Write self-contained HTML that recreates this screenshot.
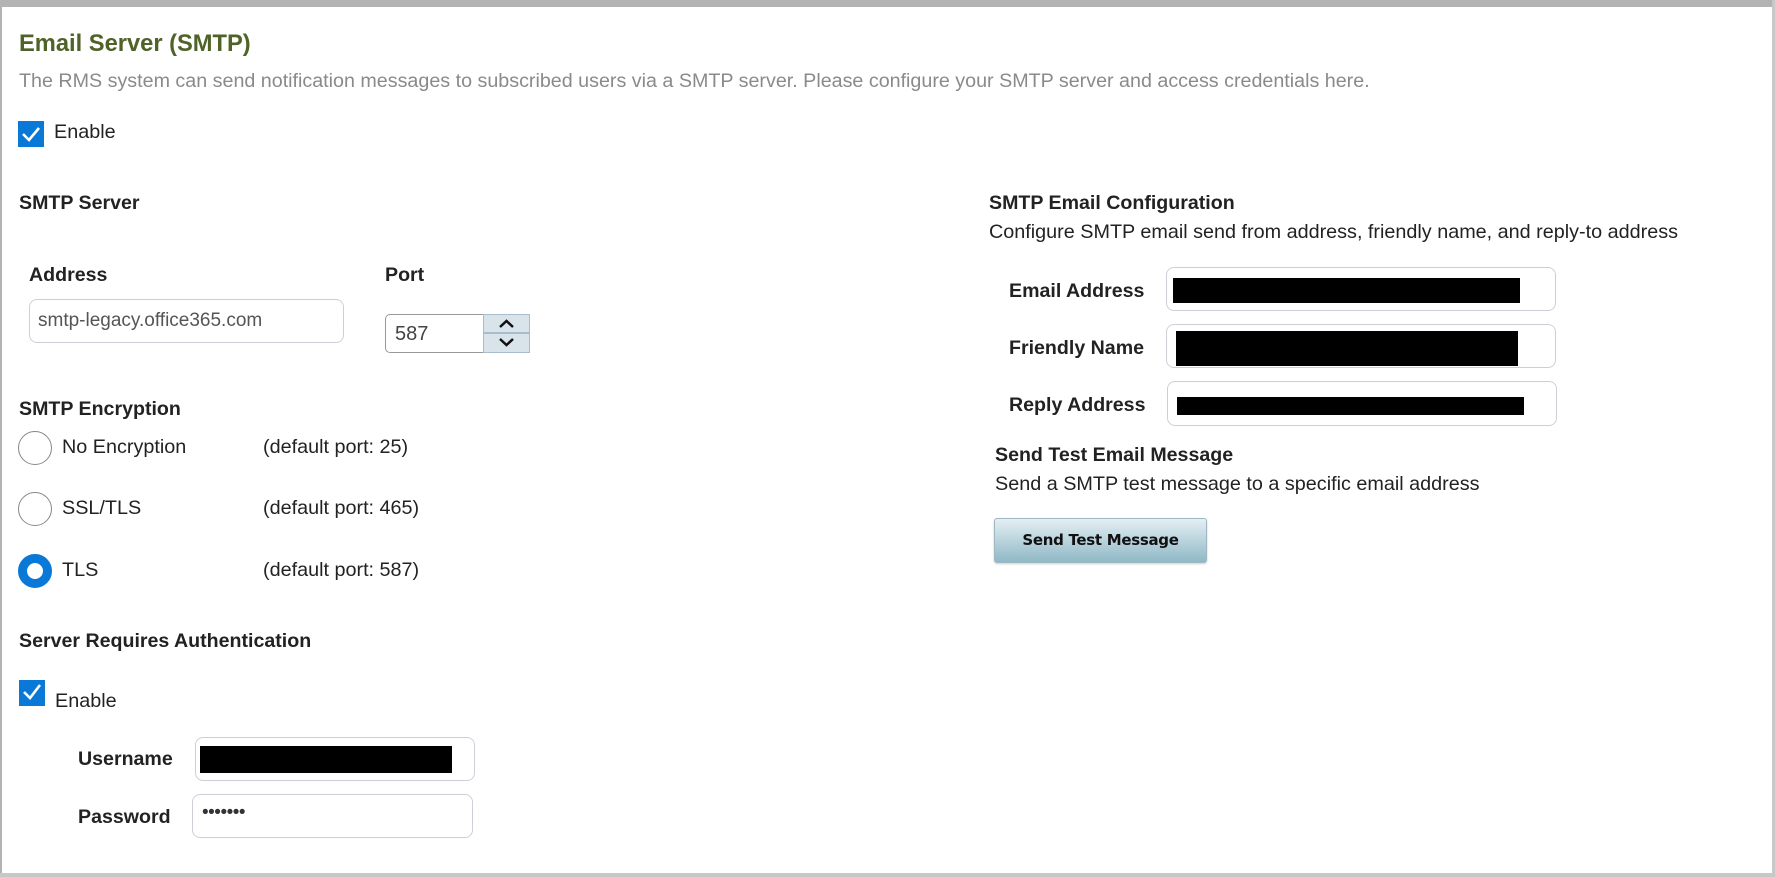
<!DOCTYPE html>
<html><head><meta charset="utf-8"><style>
*{margin:0;padding:0;box-sizing:border-box}
body{width:1775px;height:877px;background:#fff;position:relative;overflow:hidden;font-family:"Liberation Sans",Arial,sans-serif;color:#222}
.a{position:absolute;white-space:nowrap}
.b{font-weight:bold;font-size:19.6px;color:#222}
.t{font-size:19.8px;color:#222}
.inp{position:absolute;border:1px solid #ccd0d6;border-radius:8px;background:#fff}
.blk{position:absolute;background:#000}
.cb{position:absolute;background:#0a78d7;width:26px;height:26px}
.rd{position:absolute;width:34px;height:34px;border-radius:50%;border:1.5px solid #888;background:#fff}
</style></head><body>
<div class="a" style="left:0;top:0;width:1775px;height:7px;background:#b3b3b3"></div>
<div class="a" style="left:0;top:0;width:2px;height:877px;background:#b3b3b3"></div>
<div class="a" style="left:1772px;top:0;width:3px;height:877px;background:#c8c8c8"></div>
<div class="a" style="left:0;top:873px;width:1775px;height:4px;background:#c8c8c8"></div>

<div class="a" style="left:19px;top:31px;font-size:23.7px;font-weight:bold;color:#4f6228">Email Server (SMTP)</div>
<div class="a" style="left:19px;top:70px;font-size:19.7px;color:#8a8a8a">The RMS system can send notification messages to subscribed users via a SMTP server. Please configure your SMTP server and access credentials here.</div>

<div class="cb" style="left:18px;top:121px"><svg width="26" height="26"><path d="M5 13 L11 19 L21 7" stroke="#fff" stroke-width="2.6" fill="none"/></svg></div>
<div class="a t" style="left:54px;top:121px">Enable</div>

<div class="a b" style="left:19px;top:192px">SMTP Server</div>
<div class="a b" style="left:29px;top:264px">Address</div>
<div class="a b" style="left:385px;top:264px">Port</div>
<div class="inp" style="left:29px;top:299px;width:315px;height:44px"></div>
<div class="a" style="left:38px;top:310px;font-size:19px;color:#555">smtp-legacy.office365.com</div>
<div class="inp" style="left:385px;top:314px;width:99px;height:39px;border-radius:5px 0 0 5px;border-color:#999"></div>
<div class="a" style="left:395px;top:323px;font-size:20px;color:#444">587</div>
<div class="a" style="left:483px;top:314px;width:47px;height:39px;background:#d9e3ea;border:1px solid #a9bccb"></div>
<div class="a" style="left:484px;top:332px;width:45px;height:2px;background:#a9bccb"></div>
<svg class="a" style="left:483px;top:314px" width="47" height="39"><path d="M17 13 L23.5 7 L30 13" stroke="#111" stroke-width="2.5" fill="none"/><path d="M17 25 L23.5 31 L30 25" stroke="#111" stroke-width="2.5" fill="none"/></svg>

<div class="a b" style="left:19px;top:398px">SMTP Encryption</div>
<div class="rd" style="left:18px;top:431px"></div>
<div class="a t" style="left:62px;top:436px">No Encryption</div>
<div class="a t" style="left:263px;top:436px">(default port: 25)</div>
<div class="rd" style="left:18px;top:492px"></div>
<div class="a t" style="left:62px;top:497px">SSL/TLS</div>
<div class="a t" style="left:263px;top:497px">(default port: 465)</div>
<div class="rd" style="left:18px;top:554px;border:9px solid #0a78d7"></div>
<div class="a t" style="left:62px;top:559px">TLS</div>
<div class="a t" style="left:263px;top:559px">(default port: 587)</div>

<div class="a b" style="left:19px;top:630px">Server Requires Authentication</div>
<div class="cb" style="left:19px;top:680px"><svg width="26" height="26"><path d="M5 12 L11 18 L21 5" stroke="#fff" stroke-width="2.6" fill="none"/></svg></div>
<div class="a t" style="left:55px;top:690px">Enable</div>

<div class="a b" style="left:78px;top:748px">Username</div>
<div class="inp" style="left:195px;top:737px;width:280px;height:44px"></div>
<div class="blk" style="left:200px;top:746px;width:252px;height:27px"></div>
<div class="a b" style="left:78px;top:806px">Password</div>
<div class="inp" style="left:192px;top:794px;width:281px;height:44px"></div>
<div class="a" style="left:202px;top:802px;font-size:19px;color:#333;letter-spacing:-0.5px">•••••••</div>

<div class="a b" style="left:989px;top:192px">SMTP Email Configuration</div>
<div class="a" style="left:989px;top:221px;font-size:19.8px;color:#222">Configure SMTP email send from address, friendly name, and reply-to address</div>

<div class="a b" style="left:1009px;top:280px">Email Address</div>
<div class="inp" style="left:1166px;top:267px;width:390px;height:44px"></div>
<div class="blk" style="left:1173px;top:278px;width:347px;height:25px"></div>
<div class="a b" style="left:1009px;top:337px">Friendly Name</div>
<div class="inp" style="left:1166px;top:324px;width:390px;height:44px"></div>
<div class="blk" style="left:1176px;top:331px;width:342px;height:35px"></div>
<div class="a b" style="left:1009px;top:394px">Reply Address</div>
<div class="inp" style="left:1167px;top:381px;width:390px;height:45px"></div>
<div class="blk" style="left:1177px;top:397px;width:347px;height:18px"></div>

<div class="a b" style="left:995px;top:444px">Send Test Email Message</div>
<div class="a" style="left:995px;top:473px;font-size:19.8px;color:#222">Send a SMTP test message to a specific email address</div>

<div class="a" style="left:994px;top:518px;width:213px;height:45px;border:1px solid #9fb9c4;border-radius:3px;background:linear-gradient(#e4eff3,#8fb8c6);box-shadow:0 1px 2px rgba(0,0,0,.2)"></div>
<div class="a" style="left:994px;top:531px;width:213px;text-align:center;font-family:'DejaVu Sans',sans-serif;font-weight:bold;font-size:15px;color:#111;letter-spacing:-0.3px">Send Test Message</div>
</body></html>
